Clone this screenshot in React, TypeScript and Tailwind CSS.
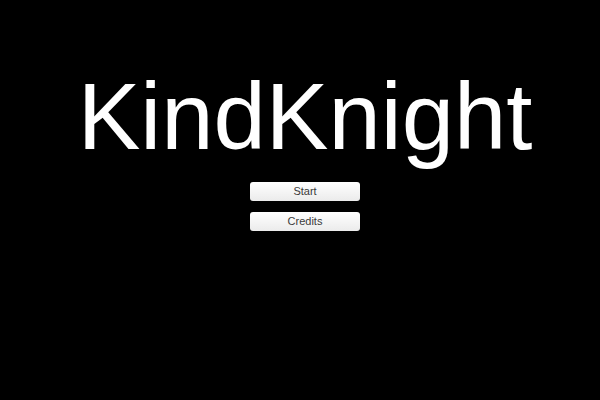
export default function App() {
  return (
    <div
      className="w-[600px] h-[400px] bg-black flex flex-col items-center pt-[70px] pl-[10px]"
      style={{ fontFamily: '"Liberation Sans", Arial, sans-serif' }}
    >
      <h1 className="text-[94px] leading-none text-white font-normal">KindKnight</h1>
      <div className="mt-[18px] flex flex-col gap-[11px]">
        <button className="w-[110px] h-[19px] rounded-[3px] bg-gradient-to-b from-[#ffffff] to-[#ebebeb] text-[11px] text-[#3a3a3a] leading-none">
          Start
        </button>
        <button className="w-[110px] h-[19px] rounded-[3px] bg-gradient-to-b from-[#ffffff] to-[#ebebeb] text-[11px] text-[#3a3a3a] leading-none">
          Credits
        </button>
      </div>
    </div>
  );
}
